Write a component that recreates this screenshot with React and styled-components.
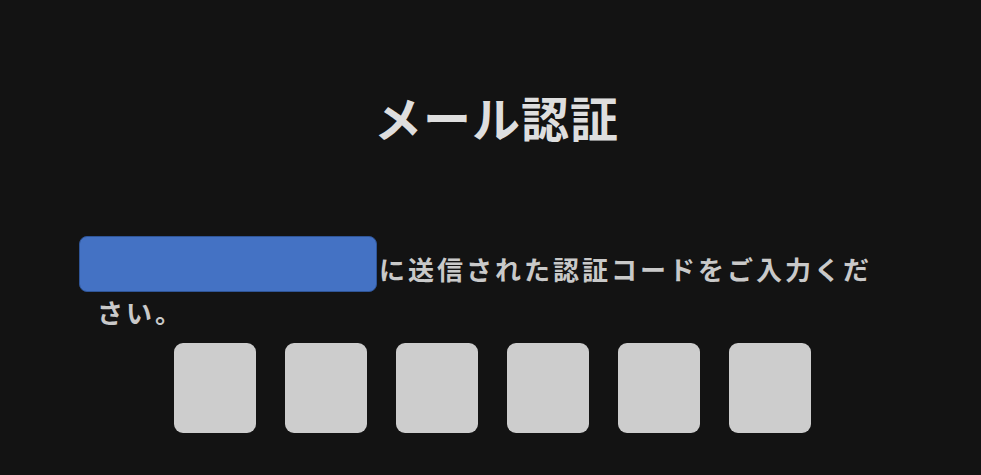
import React from 'react'
import styled, { createGlobalStyle } from 'styled-components'

const Global = createGlobalStyle`
  html, body {
    margin: 0;
    padding: 0;
    background: #131313;
  }
  body {
    font-family: "Noto Sans CJK JP", "Noto Sans", sans-serif;
  }
`

const Page = styled.div`
  width: 981px;
  height: 475px;
  overflow: hidden;
  background: #131313;
  display: flex;
  flex-direction: column;
  align-items: center;
  padding-top: 90px;
  box-sizing: border-box;
`

const Title = styled.h1`
  margin: 0;
  font-size: 48px;
  line-height: 52px;
  font-weight: 700;
  color: #dedede;
  letter-spacing: 1px;
  padding-left: 12px;
`

const Message = styled.p`
  margin: 94px 0 0 79px;
  width: 812px;
  padding-left: 18px;
  box-sizing: border-box;
  align-self: flex-start;
  font-size: 26px;
  line-height: 40px;
  letter-spacing: 3px;
  font-weight: 700;
  color: #c9c9c9;
`

const Redacted = styled.span`
  display: inline-block;
  width: 298px;
  height: 56px;
  margin-left: -18px;
  margin-right: 2px;
  vertical-align: -12px;
  background: #4472c4;
  border: 1px solid #2f5597;
  border-radius: 8px;
  box-sizing: border-box;
`

const CodeRow = styled.div`
  display: flex;
  gap: 29px;
  margin-top: 11px;
  padding-left: 3px;
`

const CodeBox = styled.div`
  width: 82px;
  height: 90px;
  border-radius: 9px;
  background: #cdcdcd;
`

export default function App() {
  return (
    <>
      <Global />
      <Page>
        <Title>メール認証</Title>
        <Message>
          <Redacted />
          に送信された認証コードをご入力ください。
        </Message>
        <CodeRow>
          {[0, 1, 2, 3, 4, 5].map((i) => (
            <CodeBox key={i} />
          ))}
        </CodeRow>
      </Page>
    </>
  )
}
